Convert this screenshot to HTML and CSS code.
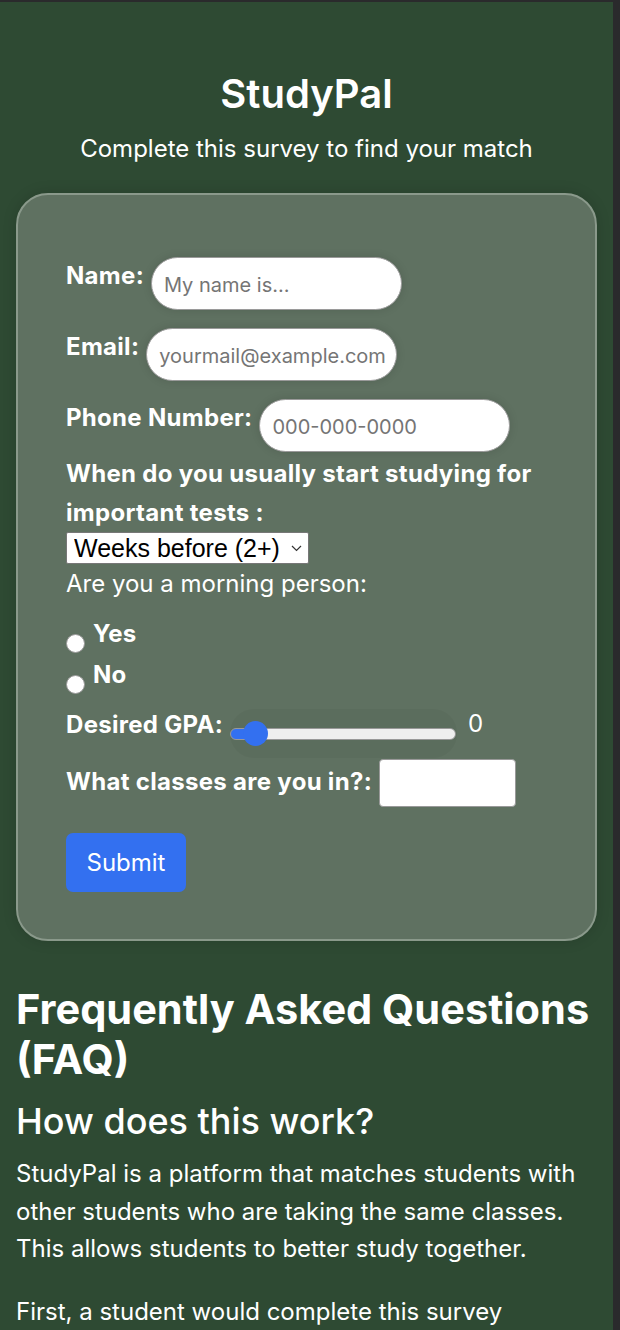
FILE: index.html
```html
<html>
<head>
<title>StudyPal</title>
<link rel="stylesheet" href="styles.css">
</head>
<body>

<h1 class="title">StudyPal</h1>
<p class="subtitle">Complete this survey to find your match</p>

<form class="survey">
  <div class="row">
    <label for="name">Name:</label>
    <input id="name" class="pill" type="text" placeholder="My name is...">
  </div>
  <div class="row">
    <label for="email">Email:</label>
    <input id="email" class="pill" type="email" placeholder="yourmail@example.com">
  </div>
  <div class="row">
    <label for="phone">Phone Number:</label>
    <input id="phone" class="pill" type="tel" placeholder="000-000-0000">
  </div>

  <label class="question" for="start">When do you usually start studying for important tests :</label>
  <div class="select-wrap">
    <select id="start">
      <option>Weeks before (2+)</option>
      <option>A week before</option>
      <option>Days before</option>
      <option>The night before</option>
    </select>
    <svg class="chevron" width="11" height="7" viewBox="0 0 11 7"><path d="M1 1 L5.5 5.5 L10 1" fill="none" stroke="#333" stroke-width="1.2"/></svg>
  </div>

  <p class="plain">Are you a morning person:</p>
  <div class="radio-row">
    <input type="radio" id="yes" name="morning">
    <label for="yes">Yes</label>
  </div>
  <div class="radio-row">
    <input type="radio" id="no" name="morning">
    <label for="no">No</label>
  </div>

  <div class="row gpa">
    <label for="gpa">Desired GPA:</label>
    <span class="slider-box">
      <input id="gpa" type="range" min="0" max="4" step="0.1" value="0">
    </span>
    <span id="gpaValue" class="gpa-value">0</span>
  </div>

  <div class="row classes">
    <label for="classes">What classes are you in?:</label>
    <input id="classes" class="box" type="text">
  </div>

  <button type="submit" class="submit">Submit</button>
</form>

<h1 class="faq-title">Frequently Asked Questions (FAQ)</h1>
<h2 class="faq-q">How does this work?</h2>
<p class="faq-a">StudyPal is a platform that matches students with other students who are taking the same classes. This allows students to better study together.</p>
<p class="faq-a">First, a student would complete this survey regarding their classes and study habits.</p>

<script>
  const gpa = document.getElementById('gpa');
  const gpaValue = document.getElementById('gpaValue');

  gpa.addEventListener('input', () => {
    gpaValue.textContent = gpa.value;
  });
</script>

</body>
</html>
```

FILE: styles.css
```css
html {
  background-color: #2a2a2c;
}

body {
  margin: 2px 7px 0 0;
  padding: 0 16px 40px;
  background-color: #2e4a33;
  color: #fff;
  font-family: Inter, "Noto Sans", sans-serif;
  font-size: 24px;
}

.title {
  text-align: center;
  font-size: 40px;
  font-weight: 600;
  line-height: 48px;
  margin: 68px 0 0;
}

.subtitle {
  text-align: center;
  font-size: 24px;
  line-height: 30px;
  margin: 16px 0 29px;
}

.survey {
  background-color: #5f7161;
  border: 2px solid #8a998b;
  border-radius: 32px;
  box-shadow: 0 0 14px rgba(0, 0, 0, 0.15);
  padding: 62px 48px 47px;
}

.row {
  display: flex;
  align-items: flex-start;
  gap: 7px;
  margin-bottom: 18px;
}

.row label,
.question,
.radio-row label {
  font-weight: 700;
  letter-spacing: 0.3px;
}

.row label {
  line-height: 30px;
  margin-top: 4px;
}

.pill {
  width: 251px;
  height: 53px;
  box-sizing: border-box;
  border: 1.5px solid #9a9a9a;
  border-radius: 27px;
  padding: 2px 4px 0 12px;
  font-family: Inter, sans-serif;
  font-size: 20px;
  box-shadow: 0 0 10px rgba(0, 0, 0, 0.12);
}

.pill::placeholder {
  color: #757575;
}

.question {
  display: block;
  line-height: 39px;
  margin-top: -16px;
}

.select-wrap {
  position: relative;
  display: inline-block;
  vertical-align: top;
}

select {
  appearance: none;
  display: block;
  width: 243px;
  height: 32px;
  border: 1px solid #777;
  border-radius: 2px;
  background-color: #fff;
  color: #000;
  font-family: "Liberation Sans", Arial, sans-serif;
  font-size: 25px;
  padding: 0 0 0 7px;
}

.chevron {
  position: absolute;
  right: 7px;
  top: 13px;
  pointer-events: none;
}

.plain {
  margin: 0 0 12px;
  line-height: 39px;
}

.radio-row {
  display: flex;
  align-items: flex-start;
  height: 41px;
}

.radio-row input {
  appearance: none;
  width: 19px;
  height: 19px;
  margin: 19px 8px 0 0;
  border: 1px solid #999;
  border-radius: 50%;
  background-color: #fff;
}

.radio-row label {
  line-height: 30px;
  margin-top: 4px;
}

.gpa {
  margin-top: 12px;
  margin-bottom: 1px;
}

.gpa label {
  margin-top: 1px;
}

.slider-box {
  display: inline-flex;
  align-items: center;
  height: 49px;
  padding: 0 1px 0 0;
  border-radius: 24px;
  background-color: rgba(0, 0, 0, 0.035);
}

input[type=range] {
  appearance: none;
  width: 226px;
  height: 12px;
  margin: 0;
  border: 1px solid #999;
  border-radius: 6px;
  background: linear-gradient(to right, #3370f0 0, #3370f0 20px, #efefef 20px);
}

input[type=range]::-webkit-slider-thumb {
  appearance: none;
  width: 25px;
  height: 25px;
  border-radius: 50%;
  background-color: #3370f0;
  border: none;
  margin-left: 12px;
}

.gpa-value {
  margin-left: 4px;
  line-height: 30px;
  font-weight: 400;
}

.classes label {
  margin-top: 8px;
}

.box {
  width: 137px;
  height: 48px;
  box-sizing: border-box;
  border: 1.5px solid #999;
  border-radius: 4px;
  background-color: #fff;
}

.submit {
  display: block;
  width: 120px;
  height: 59px;
  margin-top: 26px;
  border: none;
  border-radius: 7px;
  background-color: #3370f0;
  color: #fff;
  font-family: Inter, sans-serif;
  font-size: 24px;
  cursor: pointer;
}

.faq-title {
  font-size: 41.5px;
  font-weight: 700;
  line-height: 50px;
  margin: 43px 0 15px;
}

.faq-q {
  font-size: 36px;
  font-weight: 500;
  line-height: 44px;
  margin: 0 0 12px;
}

.faq-a {
  line-height: 37.5px;
  margin: 0 0 25px;
}
```
